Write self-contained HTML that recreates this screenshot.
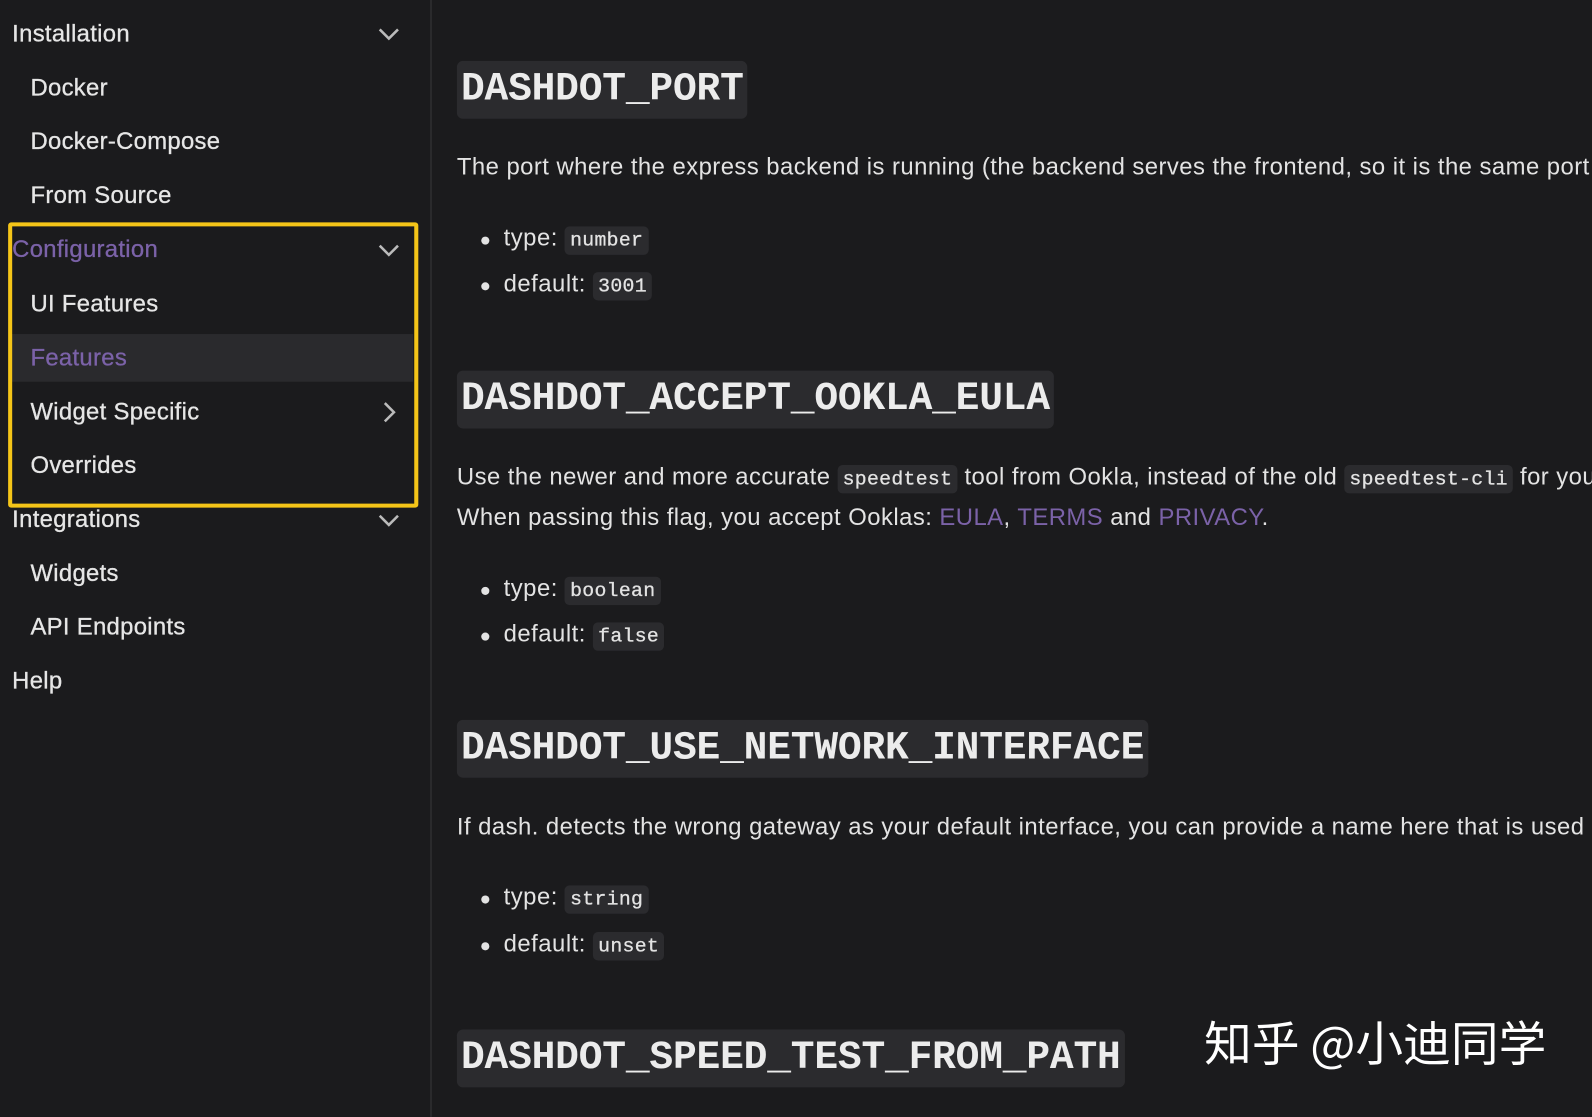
<!DOCTYPE html>
<html><head><meta charset="utf-8"><style>
*{margin:0;padding:0;box-sizing:border-box}
html,body{width:1592px;height:1105px;overflow:hidden;background:#1b1b1d;font-family:"Liberation Sans","Noto Sans CJK SC",sans-serif;color:#e3e3e3}
#wrap{position:absolute;left:0;top:0;width:1568px;height:1089px;transform:scale(1.0153);transform-origin:0 0}
.side{position:absolute;left:0;top:0;width:425px;height:1100px;border-right:1px solid #3a3a3c;background:#1b1b1d}
.it{position:absolute;font-size:23.5px;color:#e6e6e6;white-space:nowrap;letter-spacing:0.3px;-webkit-text-stroke:0.3px #e6e6e6}
.top{left:12px}.sub{left:30px}
.chev{position:absolute;left:372px;width:22px;height:22px}
.sel{position:absolute;left:10px;top:329px;width:397px;height:47px;background:#2a2a2d}
.box{position:absolute;left:8px;top:219px;width:404px;height:281px;border:4px solid #f5c518;border-radius:3px}
.main{position:absolute;left:426px;top:0;right:0;bottom:0;overflow:hidden}
.h{position:absolute;left:24px;height:57px;padding:0 4px;background:#2b2b2e;border-radius:6px;font-family:"Liberation Mono",monospace;font-weight:bold;font-size:39px;line-height:57px;color:#ececec;white-space:nowrap;letter-spacing:-0.2px}
.p{position:absolute;left:24px;font-size:23.5px;white-space:nowrap;color:#e3e3e3;letter-spacing:0.45px}
code{font-family:"Liberation Mono",monospace;font-size:19.5px;background:#2b2b2e;border-radius:5px;padding:3px 5px;letter-spacing:0.3px;-webkit-text-stroke:0.3px #e3e3e3}
.li{position:absolute;left:48px;font-size:23.5px;white-space:nowrap;letter-spacing:0.5px}
.li:before{content:"";position:absolute;left:0;top:12px;width:8px;height:8px;border-radius:50%;background:#e3e3e3}
.li span{margin-left:22px}
a{color:#7b62a8;text-decoration:none}
.wm{position:absolute;left:1186px;top:990px;font-size:47px;color:#fff;font-family:"Noto Sans CJK SC",sans-serif;white-space:nowrap}
</style></head><body><div id="wrap">
<div class="side">
<div class="sel"></div>
<div class="it top" style="top:20px">Installation</div>
<svg class="chev" style="top:22px" viewBox="0 0 22 22"><path d="M2 7l9 9 9-9" stroke="#bbb" stroke-width="2.5" fill="none"/></svg>
<div class="it sub" style="top:73px">Docker</div>
<div class="it sub" style="top:126px">Docker-Compose</div>
<div class="it sub" style="top:179px">From Source</div>
<div class="it top" style="top:232px;color:#7b62a8;-webkit-text-stroke:0.3px #7b62a8">Configuration</div>
<svg class="chev" style="top:235px" viewBox="0 0 22 22"><path d="M2 7l9 9 9-9" stroke="#bbb" stroke-width="2.5" fill="none"/></svg>
<div class="it sub" style="top:286px">UI Features</div>
<div class="it sub" style="top:339px;color:#7b62a8;-webkit-text-stroke:0.3px #7b62a8">Features</div>
<div class="it sub" style="top:392px">Widget Specific</div>
<svg class="chev" style="top:395px" viewBox="0 0 22 22"><path d="M7 2l9 9-9 9" stroke="#bbb" stroke-width="2.5" fill="none"/></svg>
<div class="it sub" style="top:445px">Overrides</div>
<div class="it top" style="top:498px">Integrations</div>
<svg class="chev" style="top:501px" viewBox="0 0 22 22"><path d="M2 7l9 9 9-9" stroke="#bbb" stroke-width="2.5" fill="none"/></svg>
<div class="it sub" style="top:551px">Widgets</div>
<div class="it sub" style="top:604px">API Endpoints</div>
<div class="it top" style="top:657px">Help</div>
<div class="box"></div>
</div>
<div class="main">
<div class="h" style="top:60px">DASHDOT_PORT</div>
<div class="p" style="top:151px">The port where the express backend is running (the backend serves the frontend, so it is the same port for both)</div>
<div class="li" style="top:221px"><span>type: <code>number</code></span></div>
<div class="li" style="top:266px"><span>default: <code>3001</code></span></div>
<div class="h" style="top:365px">DASHDOT_ACCEPT_OOKLA_EULA</div>
<div class="p" style="top:456px">Use the newer and more accurate <code>speedtest</code> tool from Ookla, instead of the old <code>speedtest-cli</code> for your speed tests.</div>
<div class="p" style="top:496px">When passing this flag, you accept Ooklas: <a>EULA</a>, <a>TERMS</a> and <a>PRIVACY</a>.</div>
<div class="li" style="top:566px"><span>type: <code>boolean</code></span></div>
<div class="li" style="top:611px"><span>default: <code>false</code></span></div>
<div class="h" style="top:709px">DASHDOT_USE_NETWORK_INTERFACE</div>
<div class="p" style="top:801px">If dash. detects the wrong gateway as your default interface, you can provide a name here that is used instead.</div>
<div class="li" style="top:870px"><span>type: <code>string</code></span></div>
<div class="li" style="top:916px"><span>default: <code>unset</code></span></div>
<div class="h" style="top:1014px">DASHDOT_SPEED_TEST_FROM_PATH</div>
</div>
<div class="wm">知乎 @小迪同学</div>
</div></body></html>
